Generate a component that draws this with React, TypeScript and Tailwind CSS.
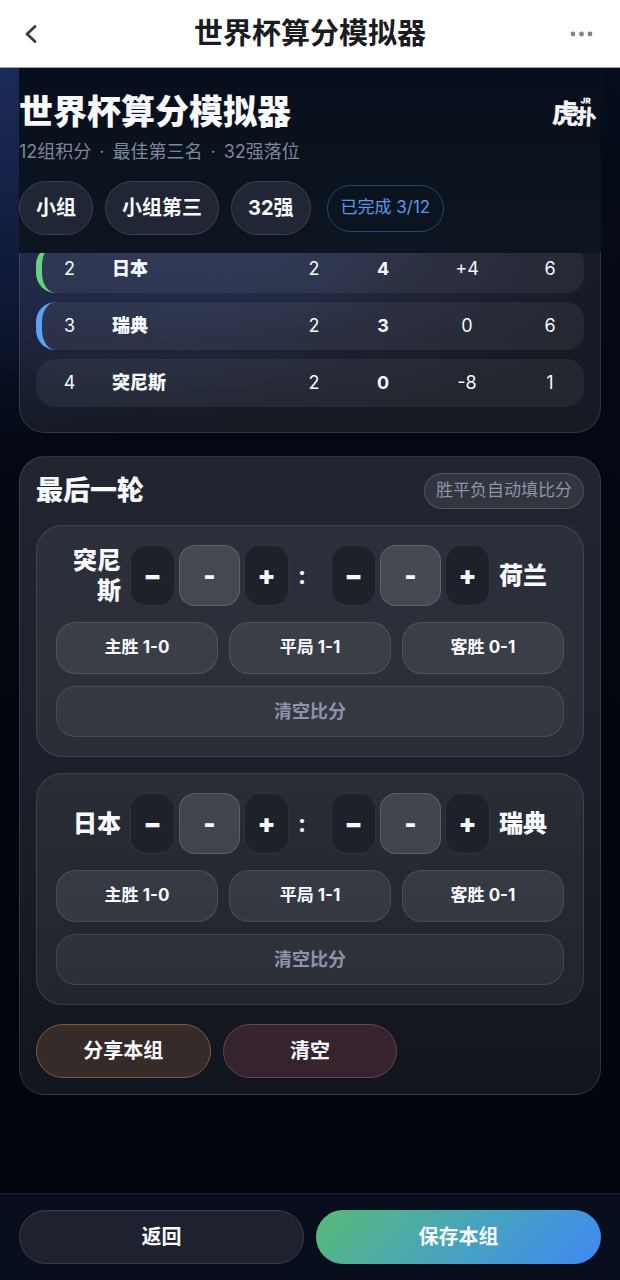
import { useState } from 'react';
import clsx from 'clsx';

type Standing = {
  rank: number;
  team: string;
  played: number;
  points: number;
  diff: string;
  goals: number;
  mark: string;
};

const standings: Standing[] = [
  { rank: 2, team: '日本', played: 2, points: 4, diff: '+4', goals: 6, mark: 'border-[#68d080]' },
  { rank: 3, team: '瑞典', played: 2, points: 3, diff: '0', goals: 6, mark: 'border-[#5ba2fa]' },
  { rank: 4, team: '突尼斯', played: 2, points: 0, diff: '-8', goals: 1, mark: 'border-transparent' },
];

const matches = [
  { home: '突尼斯', away: '荷兰' },
  { home: '日本', away: '瑞典' },
];

const tabs = ['小组', '小组第三', '32强'];

function Logo() {
  return (
    <svg
      viewBox="0 0 48 44"
      className="h-11 w-12 shrink-0 overflow-visible fill-[#f3f5f8] font-['Inter','Noto_Sans_CJK_SC',sans-serif] font-black"
      role="img"
      aria-label="虎扑 JR"
    >
      <g transform="rotate(3 24 22)">
        <text x="-1" y="32" fontSize="27">虎</text>
        <text x="23" y="32" fontSize="21">扑</text>
        <text x="27" y="11" fontSize="8">JR</text>
      </g>
    </svg>
  );
}

function Score({ label }: { label: string }) {
  const [score, setScore] = useState<number | null>(null);
  const step = 'h-[61px] w-[45px] rounded-2xl border border-white/8 bg-[#1d2129] text-[26px] leading-8 font-black';

  return (
    <div className="flex items-center gap-1">
      <button
        className={step}
        aria-label={`${label} 减一`}
        onClick={() => setScore(score ? score - 1 : null)}
      >
        −
      </button>
      <input
        className="h-[61px] w-[61px] rounded-2xl border border-white/15 bg-white/12 text-center text-[26px] font-black outline-none"
        aria-label={label}
        value={score ?? '-'}
        onChange={(e) => setScore(parseInt(e.target.value) || null)}
      />
      <button className={step} aria-label={`${label} 加一`} onClick={() => setScore((score ?? 0) + 1)}>
        +
      </button>
    </div>
  );
}

function MatchCard({ home, away }: { home: string; away: string }) {
  return (
    <div className="rounded-[26px] border border-white/10 bg-white/6 p-[19px]">
      <div className="grid grid-cols-[1fr_auto_24px_auto_1fr] items-center gap-[9px]">
        <span className="text-right text-2xl leading-[30px] font-extrabold">{home}</span>
        <Score label={home} />
        <span className="text-2xl leading-[30px] font-bold">:</span>
        <Score label={away} />
        <span className="text-2xl leading-[30px] font-extrabold">{away}</span>
      </div>

      <div className="mt-4 grid grid-cols-3 gap-[11px]">
        {['主胜 1-0', '平局 1-1', '客胜 0-1'].map((text) => (
          <button
            key={text}
            className="h-[52px] rounded-[20px] border border-white/10 bg-white/8 text-[17px] font-bold"
          >
            {text}
          </button>
        ))}
      </div>
      <button className="mt-3 h-[51px] w-full rounded-[20px] border border-white/10 bg-white/5 text-lg font-semibold text-[#8b94ab]">
        清空比分
      </button>
    </div>
  );
}

export default function App() {
  return (
    <div className="flex min-h-screen flex-col bg-[#03050d] bg-[radial-gradient(ellipse_520px_390px_at_0px_68px,#1d2b59_0%,#13204a99_50%,transparent_100%),radial-gradient(ellipse_380px_170px_at_240px_250px,#171d3a_0%,transparent_100%),linear-gradient(#070d1c,#050914_360px,#03050d_700px)] font-['Inter','Noto_Sans_CJK_SC',sans-serif] text-[#f7f9fd]">
      <nav className="flex h-[68px] items-center justify-between border-b border-gray-400 bg-white px-6 text-[#1b1c22]">
        <button className="w-8" aria-label="后退">
          <svg viewBox="0 0 16 20" className="h-5 w-4 fill-none stroke-[#3b3c40] stroke-[2.8]">
            <path d="M11 2.500 3 10l8 7.500" strokeLinecap="round" strokeLinejoin="round" />
          </svg>
        </button>
        <h1 className="text-[29px] leading-10 font-semibold">世界杯算分模拟器</h1>
        <button className="flex w-8 justify-end" aria-label="更多">
          <svg viewBox="0 0 26 6" className="h-[6px] w-[26px] fill-[#838487]">
            <circle cx="3" cy="3" r="2.400" />
            <circle cx="11.500" cy="3" r="2.400" />
            <circle cx="20" cy="3" r="2.400" />
          </svg>
        </button>
      </nav>

      <main className="flex flex-1 flex-col px-[19px]">
        {/* Header */}
        <header className="relative z-10 bg-linear-to-b from-[#080f1c] to-[#0d1520] pt-6 pb-[18px]">
          <div className="flex items-start justify-between">
            <div>
              <h2 className="text-[34px] leading-10 font-black">世界杯算分模拟器</h2>
              <p className="mt-2 flex gap-2 text-lg leading-6 text-[#7d879c]">
                <span>12组积分</span>
                <span>·</span>
                <span>最佳第三名</span>
                <span>·</span>
                <span>32强落位</span>
              </p>
            </div>
            <Logo />
          </div>
          <div className="mt-[17px] flex items-center gap-3">
            {tabs.map((tab) => (
              <button key={tab} className="h-[54px] rounded-full border border-white/12 bg-[#202633] px-4 text-xl font-bold">
                {tab}
              </button>
            ))}
            <span className="ml-1 flex h-[47px] items-center rounded-full border border-[#274672] px-[13px] text-[17px] text-[#5b98ea]">
              已完成 3/12
            </span>
          </div>
        </header>

        {/* Standings, scrolled under the header */}
        <section className="-mt-[18px] rounded-b-[26px] border border-white/12 bg-white/7 px-4 pb-4">
          <table className="w-full table-fixed border-separate border-spacing-x-0 border-spacing-y-[9px] text-lg">
            <tbody>
              {standings.map((row) => (
                <tr key={row.rank} className="h-12 text-center">
                  <td className={clsx('w-[61px] rounded-l-[20px] border-l-[6px] bg-white/6', row.mark)}>{row.rank}</td>
                  <th scope="row" className="bg-white/6 pl-[15px] text-left font-extrabold">{row.team}</th>
                  <td className="w-[68px] bg-white/6">{row.played}</td>
                  <td className="w-[70px] bg-white/6 font-bold">{row.points}</td>
                  <td className="w-[98px] bg-white/6">{row.diff}</td>
                  <td className="w-[68px] rounded-r-[18px] bg-white/6">{row.goals}</td>
                </tr>
              ))}
            </tbody>
          </table>
        </section>

        {/* Last round */}
        <section className="mt-[23px] rounded-[26px] border border-white/12 bg-linear-to-b from-[#20252f] via-[#1b202a] to-[#11151d] p-4">
          <div className="flex items-center justify-between">
            <h3 className="text-[27px] leading-9 font-black">最后一轮</h3>
            <span className="flex h-9 items-center rounded-full border border-white/15 bg-white/8 px-[11px] text-[17px] text-[#8b94a9]">
              胜平负自动填比分
            </span>
          </div>
          <div className="mt-4 flex flex-col gap-4">
            {matches.map((match) => (
              <MatchCard key={match.home} {...match} />
            ))}
          </div>
          <div className="mt-[19px] grid grid-cols-3 gap-3">
            <button className="h-[54px] rounded-full border border-[#7b5b3a] bg-[#352b29] text-xl font-bold">分享本组</button>
            <button className="h-[54px] rounded-full border border-[#74404f] bg-[#35232d] text-xl font-bold">清空</button>
          </div>
        </section>
      </main>

      <footer className="sticky bottom-0 z-20 grid grid-cols-2 gap-3 border-t border-[#1b2130] bg-[#080e1b] px-[19px] py-4">
        <button className="h-[54px] rounded-full border border-white/12 bg-[#1d222e] text-xl font-bold">返回</button>
        <button className="h-[54px] rounded-full bg-linear-135 from-[#5bb974] to-[#4287f5] text-xl font-bold">保存本组</button>
      </footer>
    </div>
  );
}
